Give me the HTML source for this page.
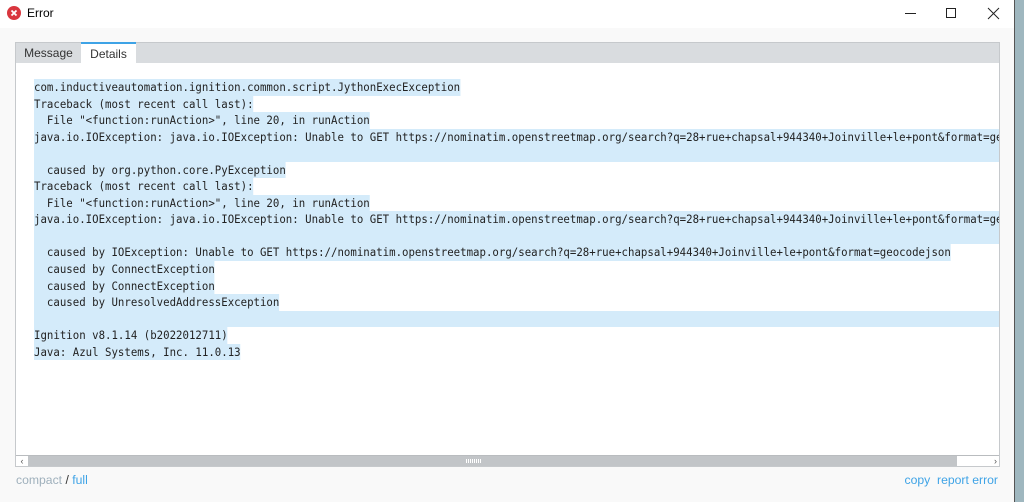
<!DOCTYPE html><html><head><style>
*{margin:0;padding:0;box-sizing:border-box}
body{width:1024px;height:502px;overflow:hidden;background:#9fb7bf;font-family:"Liberation Sans",sans-serif;position:relative}
#win{position:absolute;left:0;top:0;width:1015px;height:502px;background:#f9f9f9;border-right:1px solid #555}
#title{position:absolute;left:0;top:0;width:1014px;height:28px;background:#fff}
.ttl{position:absolute;left:27px;top:6px;font-size:12px;color:#000}
#tabs{position:absolute;left:15px;top:42px;width:985px;height:22px;background:#d9dcdf;border:1px solid #c6c9cc;border-bottom:1px solid #c3c6c9}
.tab{position:absolute;top:0;height:21px;font-size:12px;color:#333;line-height:21px;text-align:center}
#content{position:absolute;left:15px;top:63px;width:985px;height:404px;background:#fff;border:1px solid #c6c9cc;border-top:none;overflow:hidden}
pre{position:absolute;left:18px;top:16px;font-family:"DejaVu Sans Mono",monospace;font-size:11.6px;line-height:16.55px;color:#222;white-space:pre;transform:scaleX(0.925);transform-origin:0 0}
pre span{background:#d4ebfa;display:inline-block;height:16.55px;vertical-align:top}
.e{width:1100px}
#sb{position:absolute;left:0;bottom:0;width:983px;height:11px;background:#c2c5c8;border-top:1px solid #b9bcbf}
.ft{position:absolute;top:473px;font-size:12.2px;color:#3ea3e6}
</style></head><body>
<div id="win">
<div id="title">
<svg style="position:absolute;left:7px;top:6px" width="14" height="14"><circle cx="7" cy="7" r="7" fill="#d9363e"/><path d="M4.5 4.5L9.5 9.5M9.5 4.5L4.5 9.5" stroke="#fff" stroke-width="1.8"/></svg>
<div class="ttl">Error</div>
<svg style="position:absolute;left:900px;top:7px" width="100" height="14"><path d="M5 6.5H16" stroke="#222" stroke-width="1"/><rect x="46.5" y="1.5" width="9" height="9" fill="none" stroke="#222"/><path d="M88 1L99 12M99 1L88 12" stroke="#222" stroke-width="1"/></svg>
</div>
<div id="tabs">
<div class="tab" style="left:0;width:65px">Message</div>
<div class="tab" style="left:65px;width:55px;background:#fff;height:22px;border-top:2px solid #3ea3e6;top:-1px;line-height:20px">Details</div>
</div>
<div id="content">
<pre><span>com.inductiveautomation.ignition.common.script.JythonExecException</span>
<span>Traceback (most recent call last):</span>
<span>  File "&lt;function:runAction&gt;", line 20, in runAction</span>
<span>java.io.IOException: java.io.IOException: Unable to GET https://nominatim.openstreetmap.org/search?q=28+rue+chapsal+944340+Joinville+le+pont&amp;format=geocodejson</span>
<span class="e"></span>
<span>  caused by org.python.core.PyException</span>
<span>Traceback (most recent call last):</span>
<span>  File "&lt;function:runAction&gt;", line 20, in runAction</span>
<span>java.io.IOException: java.io.IOException: Unable to GET https://nominatim.openstreetmap.org/search?q=28+rue+chapsal+944340+Joinville+le+pont&amp;format=geocodejson</span>
<span class="e"></span>
<span>  caused by IOException: Unable to GET https://nominatim.openstreetmap.org/search?q=28+rue+chapsal+944340+Joinville+le+pont&amp;format=geocodejson</span>
<span>  caused by ConnectException</span>
<span>  caused by ConnectException</span>
<span>  caused by UnresolvedAddressException</span>
<span class="e"></span>
<span>Ignition v8.1.14 (b2022012711)</span>
<span>Java: Azul Systems, Inc. 11.0.13</span></pre>
<div id="sb"><div style="position:absolute;left:0;top:0;width:12px;height:10px;background:#fff;font-size:9px;color:#555;text-align:center">‹</div><div style="position:absolute;left:450px;top:3px;width:16px;height:4px;background:repeating-linear-gradient(90deg,#fff 0 1px,transparent 1px 2px)"></div><div style="position:absolute;right:0;top:0;width:42px;height:10px;background:#fff;font-size:9px;color:#555;text-align:right;padding-right:2px">›</div></div>
</div>
<div class="ft" style="left:16px"><span style="color:#9fb0bc">compact</span> <span style="color:#333">/</span> full</div>
<div class="ft" style="right:16px;text-align:right">copy &nbsp;report error</div>
</div>
</body></html>
